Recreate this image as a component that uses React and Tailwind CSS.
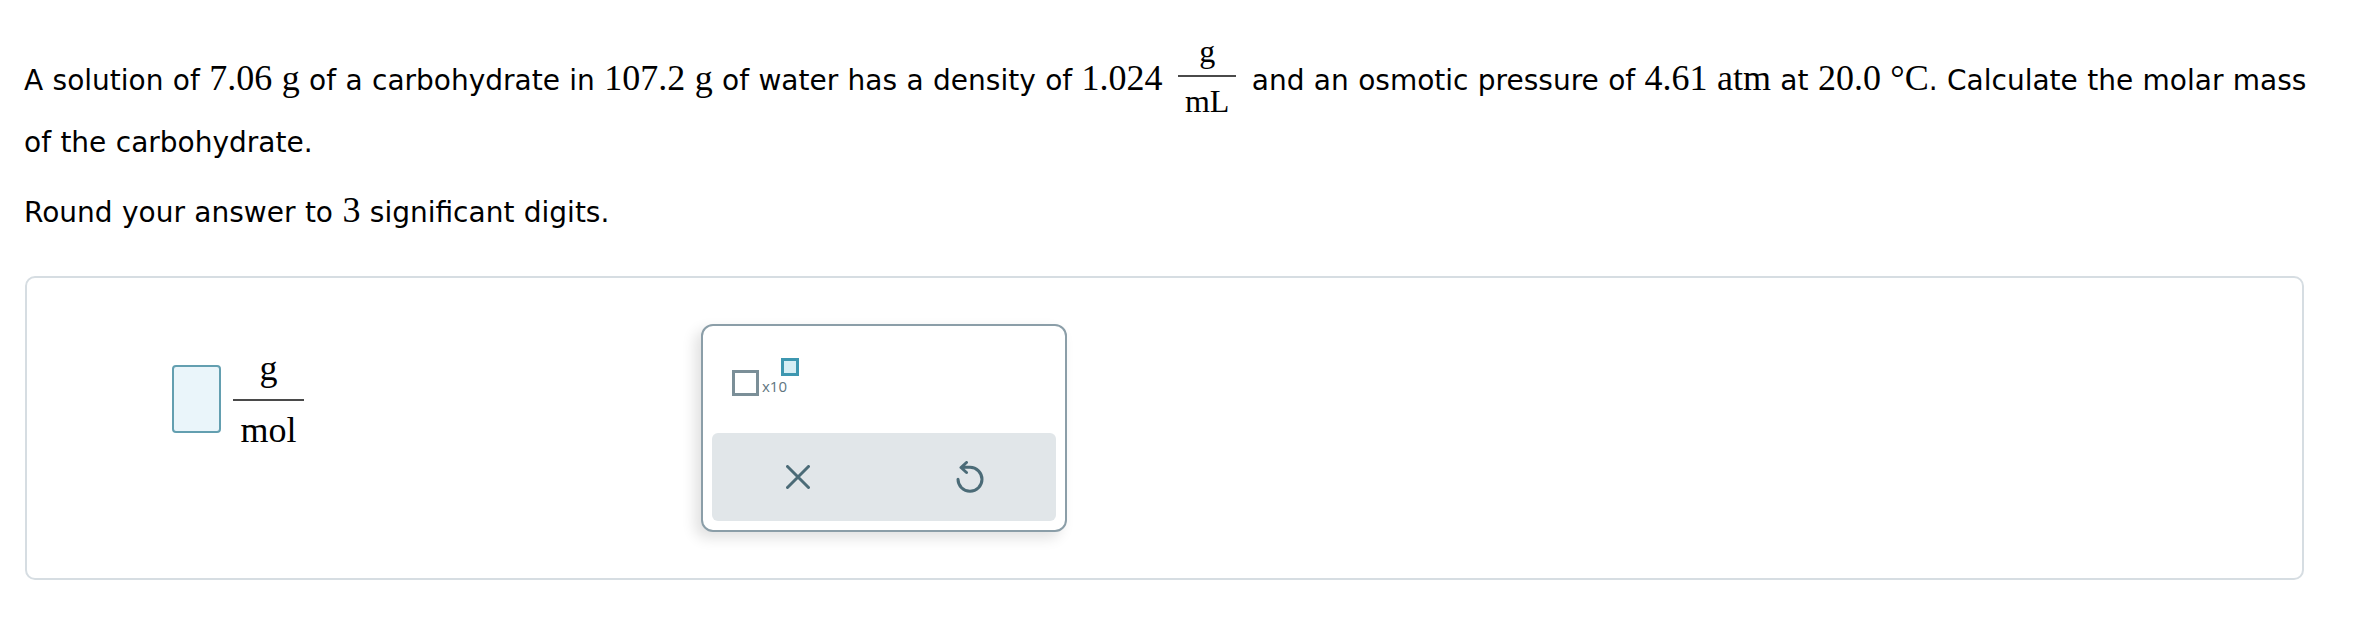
import React from "react";

const M = ({ children }) => (
  <span className="font-['Liberation_Serif',serif] text-[36px] leading-none">
    {children}
  </span>
);

const InlineFrac = ({ num, den }) => (
  <span className="inline-flex flex-col align-[28px] -mt-[20px] -mb-[10px] ml-[6px] mr-[6px] font-['Liberation_Serif',serif] text-[32px] leading-none text-center">
    <span className="block px-[7px]">{num}</span>
    <span className="block h-[2px] mt-[8px] bg-[#4a4a4a]"></span>
    <span className="block px-[7px] mt-[8px]">{den}</span>
  </span>
);

const XIcon = () => (
  <svg width="24" height="24" viewBox="0 0 24 24" fill="none">
    <path
      d="M1.5 1.5L22.5 22.5M22.5 1.5L1.5 22.5"
      stroke="#4b6b77"
      strokeWidth="3"
      strokeLinecap="round"
    />
  </svg>
);

const UndoIcon = () => (
  <svg width="30" height="32" viewBox="15 14 30 32" fill="none">
    <path
      d="M18 32.3A12 12 0 1 0 30 20.3H22M26.5 15.5L21 20.5L26.5 25.5"
      stroke="#4b6b77"
      strokeWidth="3"
      strokeLinecap="round"
      strokeLinejoin="round"
    />
  </svg>
);

export default function App() {
  return (
    <div className="min-h-screen bg-white pt-[50px] px-[24px] font-['DejaVu_Sans',sans-serif] text-[28px] text-black [word-spacing:0.5px]">
      <p className="leading-[62px]">
        A solution of <M>7.06</M> <M>g</M> of a carbohydrate in <M>107.2</M>{" "}
        <M>g</M> of water has a density of <M>1.024</M>{" "}
        <InlineFrac num="g" den="mL" /> and an osmotic pressure of{" "}
        <M>4.61</M> <M>atm</M> at <M>20.0</M> <M>°C</M>. Calculate the molar
        mass of the carbohydrate.
      </p>
      <p className="leading-[62px] mt-[8px]">
        Round your answer to <M>3</M> significant digits.
      </p>

      <div className="mt-[32px] ml-px w-[2279px] border-2 border-[#d6dde2] rounded-[10px] bg-white flex items-start">
        <div className="w-[674px] pl-[145px] pt-[72px] flex items-center gap-[12px]">
          <div className="w-[49px] h-[68px] rounded-[4px] border-2 border-[#639fb0] bg-[#eaf5fa]"></div>
          <div className="flex flex-col items-center font-['Liberation_Serif',serif] text-[36px] leading-none">
            <span>g</span>
            <span className="block w-[71px] h-[2px] mt-[13px] bg-[#4a4a4a]"></span>
            <span className="mt-[11px]">mol</span>
          </div>
        </div>

        <div className="my-[46px] w-[366px] h-[208px] border-2 border-[#8b9ea8] rounded-[12px] bg-white shadow-[-6px_6px_14px_rgba(0,0,0,0.12)] flex flex-col">
          <div className="h-[107px] pt-[32px] pl-[29px]">
            <div className="flex items-start">
              <div className="mt-[12px] w-[27px] h-[26px] border-[3px] border-[#7b8f98]"></div>
              <span className="ml-[3px] mt-[21px] font-['Open_Sans',sans-serif] text-[15px] leading-none text-[#5f7680]">
                x10
              </span>
              <div className="-ml-[6px] w-[18px] h-[18px] border-[3px] border-[#3d97b0] bg-[#d6eef4]"></div>
            </div>
          </div>
          <div className="mx-[9px] h-[88px] rounded-[6px] bg-[#e1e6e9] grid grid-cols-2">
            <div className="flex items-center justify-center">
              <XIcon />
            </div>
            <div className="flex items-center justify-center">
              <UndoIcon />
            </div>
          </div>
        </div>
      </div>
    </div>
  );
}
